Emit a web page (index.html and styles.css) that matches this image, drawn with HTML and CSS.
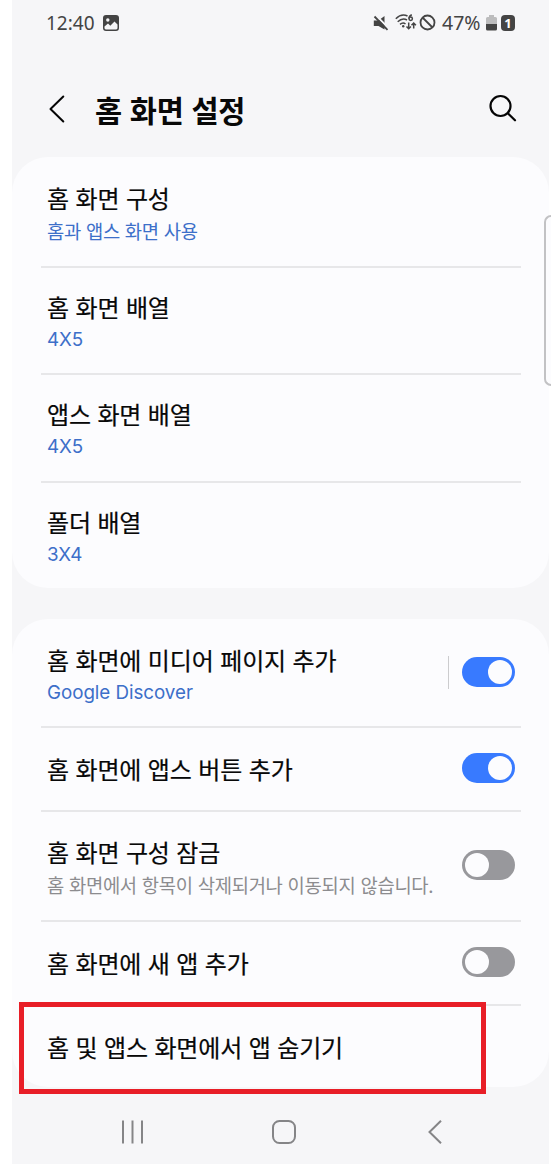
FILE: index.html
```html
<!DOCTYPE html>
<html lang="ko">
<head>
<meta charset="utf-8">
<title>홈 화면 설정</title>
<link rel="stylesheet" href="styles.css">
</head>
<body>
<div class="phone">
  <header class="status">
    <span class="clock">12:40</span>
    <svg class="picture" width="16" height="16" viewBox="0 0 16 16"><rect width="16" height="16" rx="3" fill="#444"/><circle cx="4.800" cy="5" r="1.700" fill="#f6f6f8"/><path d="M1.500 11.500 5 8.500l2.300 2.300L11.500 6.500l3 3v3.600q0 1.400-1.400 1.400H2.900q-1.400 0-1.400-1.400z" fill="#f6f6f8"/></svg>
    <div class="indicators">
      <svg width="16" height="16" viewBox="0 0 16 16"><path d="M.8 5.500h4.700L11.500 1v13.500L5.500 11H.8z" fill="#444"/><path d="M3 .5 15.500 13" stroke="#f6f6f8" stroke-width="2"/><path d="M1.500 1.500 14.500 14.800" stroke="#444" stroke-width="1.800"/></svg>
      <svg class="wifi" width="22" height="17" viewBox="0 0 22 17" fill="none" stroke="#444" stroke-width="1.500"><path d="M.8 4.700Q6.500-.9 12.500 2M2.700 7.700Q7.500 3.200 12 6M5 10.400q3-2.500 5.500-.4"/><circle cx="8.200" cy="12.300" r="1.200" fill="#444" stroke="none"/><path d="M16.800.7q-2.800 1-2.800 3.700"/><circle cx="15.700" cy="4.700" r="1.700"/><path d="M13.700 8.500v6M11.500 12.500l2.200 2.200 2.200-2.200M18.700 14.500v-5M16.500 11.300l2.200-2.200 2.200 2.200"/></svg>
      <svg width="17" height="17" viewBox="0 0 17 17" fill="none" stroke="#444" stroke-width="1.800"><circle cx="8.500" cy="8.500" r="7"/><path d="m3.500 3.500 10 10"/></svg>
      <span class="percent">47%</span>
      <svg class="battery" width="11" height="16" viewBox="0 0 11 16"><path d="M3 0h5v2h1.500Q11 2 11 3.500V9H0V3.500Q0 2 1.500 2H3z" fill="#bcbcbd"/><path d="M0 9h11v5q0 1.500-1.500 1.500h-8Q0 15.500 0 14z" fill="#444"/></svg>
      <span class="badge">1</span>
    </div>
  </header>

  <div class="appbar">
    <svg width="18" height="30" viewBox="0 0 18 30" fill="none" stroke="#050505" stroke-width="2" stroke-linecap="round" stroke-linejoin="round"><path d="M15.300 2.500 2.500 15l12.800 12.500"/></svg>
    <h1 class="heading">홈 화면 설정</h1>
    <svg class="search" width="30" height="30" viewBox="0 0 30 30" fill="none" stroke="#050505" stroke-width="2.200" stroke-linecap="round"><circle cx="12.500" cy="12" r="10"/><path d="m19.800 19.300 7.200 7"/></svg>
  </div>

  <main>
    <section class="card">
      <div class="row first"><div class="text"><div class="title">홈 화면 구성</div><div class="sub">홈과 앱스 화면 사용</div></div></div>
      <div class="row"><div class="text"><div class="title">홈 화면 배열</div><div class="sub latin">4X5</div></div></div>
      <div class="row"><div class="text"><div class="title">앱스 화면 배열</div><div class="sub latin">4X5</div></div></div>
      <div class="row"><div class="text"><div class="title">폴더 배열</div><div class="sub latin">3X4</div></div></div>
    </section>
    <section class="card">
      <div class="row media"><div class="text"><div class="title">홈 화면에 미디어 페이지 추가</div><div class="sub latin">Google Discover</div></div><i class="bar"></i><i class="switch on"></i></div>
      <div class="row single"><div class="title">홈 화면에 앱스 버튼 추가</div><i class="switch on"></i></div>
      <div class="row lock"><div class="text"><div class="title">홈 화면 구성 잠금</div><div class="sub note">홈 화면에서 항목이 삭제되거나 이동되지 않습니다.</div></div><i class="switch"></i></div>
      <div class="row single"><div class="title">홈 화면에 새 앱 추가</div><i class="switch"></i></div>
      <div class="row single last"><div class="title">홈 및 앱스 화면에서 앱 숨기기</div><div class="highlight"></div></div>
    </section>
  </main>

  <nav class="nav">
    <svg width="24" height="24" viewBox="0 0 24 24" stroke="#858587" stroke-width="2"><path d="M2 .5v23M11.500.5v23M21 .5v23"/></svg>
    <svg class="home" width="24" height="24" viewBox="0 0 24 24" fill="none" stroke="#858587" stroke-width="2"><rect x="1" y="1" width="22" height="22" rx="6.500"/></svg>
    <svg width="14" height="24" viewBox="0 0 14 24" fill="none" stroke="#858587" stroke-width="2"><path d="M13 .7 1.500 12 13 23.300"/></svg>
  </nav>
  <div class="edge"></div>
</div>
</body>
</html>
```
FILE: styles.css
```css
* { box-sizing: border-box; }
body { margin: 0; background: #fff; font-family: "Noto Sans CJK KR", sans-serif; color: #080808; overflow: hidden; }
.phone { position: relative; width: 537px; height: 1164px; margin-left: 12px; background: #f6f6f8; }
.status { display: flex; align-items: center; height: 45px; padding: 0 34px 0 34px; color: #444; font: 19px "Noto Sans", sans-serif; }
.clock { width: 49px; }
.picture { margin-left: 8px; }
.indicators { display: flex; align-items: center; margin-left: auto; }
.wifi { margin: 0 2px 0 6px; }
.percent { width: 44px; margin-left: 6px; font-size: 19.500px; }
.battery { margin: 0 4px 0 0; }
.badge { width: 14px; height: 16px; border-radius: 4px; background: #444; color: #fff; font: bold 13px/16px "Noto Sans", sans-serif; text-align: center; }
.appbar { display: flex; align-items: center; height: 112px; padding: 16px 31px 0 36px; }
.heading { margin: 0 0 0 29px; font-size: 29.500px; font-weight: 700; line-height: 40px; letter-spacing: -.3px; }
.appbar .search { margin-left: auto; }
.appbar svg { margin-bottom: 1px; }
main { display: grid; gap: 31px; }
.card { height: 431px; padding: 0 28px 0 29px; border-radius: 36px; background: #fcfcfe; }
.card + .card { height: 468px; }
.row { position: relative; display: flex; align-items: flex-start; height: 107.500px; padding: 23px 6px 0; border-bottom: 2px solid #e7e7e9; }
.row.first { height: 110.500px; padding-top: 25px; }
.row:last-child { border-bottom: 0; }
.title { font-size: 24px; line-height: 32px; letter-spacing: -.15px; white-space: nowrap; -webkit-text-stroke: .2px #080808; }
.sub { padding-top: 2px; color: #3d6fc9; font-size: 18.800px; line-height: 30px; letter-spacing: -.3px; white-space: nowrap; }
.latin { font-family: Inter, sans-serif; letter-spacing: -.05px; }
.note { color: #8c8c8f; }
.row.media { height: 109px; padding-top: 25px; }
.row.single { height: 84px; padding: 0 6px; align-items: center; }
.row.last { padding-bottom: 2px; }
.row.lock { height: 110px; padding-top: 24px; }
.switch { position: relative; width: 53px; height: 30px; margin-left: auto; border-radius: 15px; background: #98989c; }
.switch::after { content: ""; display: block; width: 24px; height: 24px; margin: 3px; border-radius: 50%; background: #fcfcfe; }
.switch.on { background: #387aff; }
.switch.on::after { margin-left: 26px; }
.media .switch { margin: 13px 0 0 13px; }
.lock .switch { margin-top: 14px; }
.single .switch { margin-bottom: 2px; }
.bar { width: 1px; height: 33px; margin: 12px 0 0 auto; background: #ccccce; }
.highlight { position: absolute; left: -22px; top: -4px; width: 467px; height: 92px; border: 5px solid #e81e27; }
.nav { display: flex; justify-content: space-between; padding: 33px 107px 0 109px; }
.home { margin-right: 6px; }
.edge { position: absolute; left: 532px; top: 215px; width: 7px; height: 171px; border: 2px solid #c2c2c4; border-right: 0; border-radius: 7px 0 0 7px; background: #fcfcfe; }
```
